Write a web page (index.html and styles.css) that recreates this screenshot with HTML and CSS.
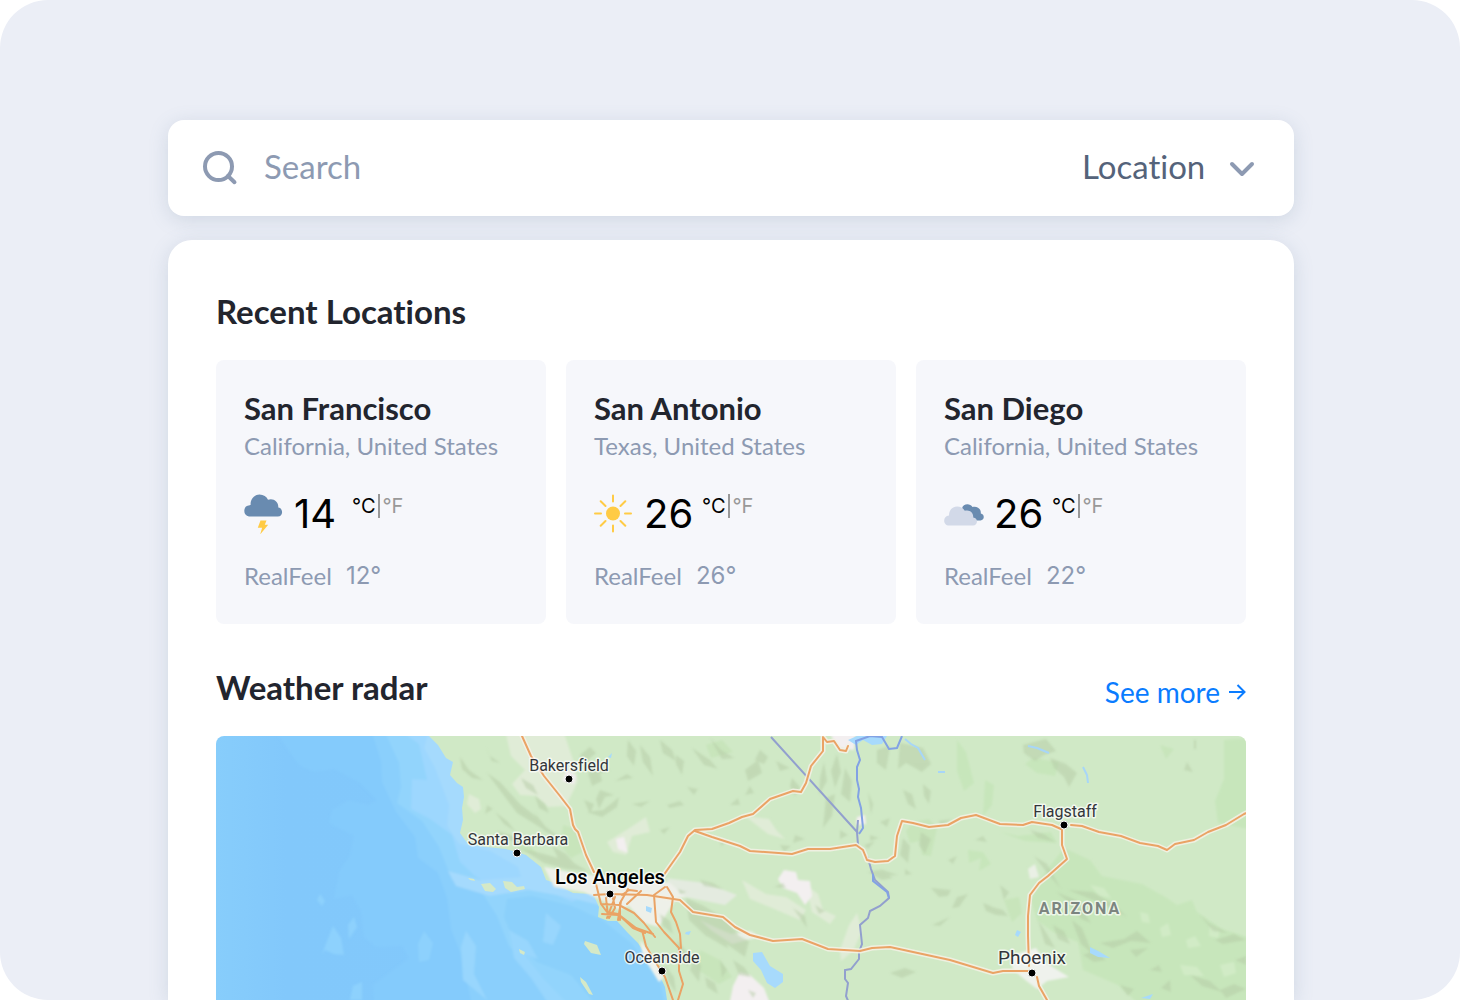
FILE: index.html
```html
<!DOCTYPE html>
<html lang="en">
<head>
  <meta charset="utf-8">
  <meta name="viewport" content="width=device-width, initial-scale=1.0">
  <title>Weather</title>
  <link rel="stylesheet" href="styles.css">
</head>
<body>
<main class="stage">
  <form class="search-bar" role="search">
    <label class="search-label" for="search" aria-label="Search">
      <svg width="40" height="40" viewBox="0 0 40 40" fill="none" stroke="#8d9ab2" stroke-width="4">
        <circle cx="18.500" cy="18.500" r="13.500"/>
        <path d="M28 28l6.500 6.200" stroke-linecap="round"/>
      </svg>
    </label>
    <input class="search-input" type="search" id="search" placeholder="Search">
    <div class="location">
      <select class="location-select" id="location" aria-label="Location">
        <option>Location</option>
      </select>
      <svg class="location-arrow" width="28" height="28" viewBox="0 0 28 28" fill="none" stroke="#8d9ab2" stroke-width="4" stroke-linecap="round" stroke-linejoin="round">
        <path d="M4 10l10 10 10-10"/>
      </svg>
    </div>
  </form>

  <section class="panel">
    <h2 class="title">Recent Locations</h2>
    <div class="cards">
      <article class="card">
        <h3 class="city">San Francisco</h3>
        <p class="region">California, United States</p>
        <div class="weather">
          <svg class="weather-icon" viewBox="0 0 40 40">
            <path fill="#698bb0" d="M5 22.500a5.700 5.700 0 0 1 .7-11.300c.3-.1.600-.1.900-.1C6.300 5 10.500.600 15.500.600c4.100 0 7 2.100 8.500 5.200 5.400-2 10.700 2 10.300 7.700 5 .7 5.300 9-.6 9z"/>
            <path fill="#ffcb45" d="M16.500 26.500h6l-1.700 4.300h3.400l-8 9.600 1.900-6.600h-4.300z"/>
          </svg>
          <span class="temp">14</span>
          <div class="units"><button class="unit active" type="button">°C</button><button class="unit" type="button">°F</button></div>
        </div>
        <p class="feel">RealFeel <span>12°</span></p>
      </article>
      <article class="card">
        <h3 class="city">San Antonio</h3>
        <p class="region">Texas, United States</p>
        <div class="weather">
          <svg class="weather-icon" viewBox="0 0 40 40">
            <circle cx="19" cy="19.500" r="7" fill="#ffcb45"/>
            <path d="M19 1.500v6M19 31.500v6M1 19.500h6M31 19.500h6M6.700 7.200l4.800 4.800M26.500 27l4.800 4.800M31.300 7.200L26.500 12M11.500 27l-4.800 4.800" stroke="#ffcb45" stroke-width="2" stroke-linecap="round"/>
          </svg>
          <span class="temp">26</span>
          <div class="units"><button class="unit active" type="button">°C</button><button class="unit" type="button">°F</button></div>
        </div>
        <p class="feel">RealFeel <span>26°</span></p>
      </article>
      <article class="card">
        <h3 class="city">San Diego</h3>
        <p class="region">California, United States</p>
        <div class="weather">
          <svg class="weather-icon" viewBox="0 0 40 40">
            <path fill="#698bb0" d="M18 14.500c1-5 8-5.500 10.500-1.500 5-1.200 8.800 2 8.300 6.500 4 .500 4 7-.3 7H30z"/>
            <path fill="#d2d9e8" d="M5.200 31.500C-1.500 31.500-1.400 22 5 21.500 5 16 8.500 12.500 13.200 12.500c3.600 0 6 1.700 7.500 4.300 5-1.700 9 2 8.500 6.700 5.300.4 4.800 8-.3 8z"/>
          </svg>
          <span class="temp">26</span>
          <div class="units"><button class="unit active" type="button">°C</button><button class="unit" type="button">°F</button></div>
        </div>
        <p class="feel">RealFeel <span>22°</span></p>
      </article>
    </div>

    <div class="radar-head">
      <h2 class="title">Weather radar</h2>
      <a class="more" href="#radar">See more
        <svg width="18" height="18" viewBox="0 0 18 18" fill="none" stroke="#0a7cff" stroke-width="2"><path d="M1 9h15M9.500 2l7 7-7 7"/></svg>
      </a>
    </div>

    <svg class="map" id="radar" viewBox="216 736 1030 264" role="img" aria-label="Weather radar map">
      <defs>
        <linearGradient id="sea" x1="0" x2="1" y1="0" y2="0">
          <stop offset="0" stop-color="#87cdfb"/>
          <stop offset=".14" stop-color="#82c8fb"/>
          <stop offset="1" stop-color="#82c9fc"/>
        </linearGradient>
        <filter id="soft"><feGaussianBlur stdDeviation="1"/></filter>
      </defs>
      <!-- sea floor -->
      <path fill="url(#sea)" d="M216 736h500v264H216z"/>
      <g filter="url(#soft)">
        <path fill="#84cbfc" d="M275 730l14 21 10 14 15 7 20-3 26 14 17 17-9 5-19-5-17 10-3 13 25 13-4 19-11 17-5 27 18-4 9 16 3 26 12 10 26-1 7 12-20 15-16 12 3 35 H560V730z"/>
        <path fill="#8acffc" d="M371 730l10 31 1 21 14 30 19 25 3 21 20 15 9 25 4 31 9 23 5 20 7 34h240V730z"/>
        <path fill="#92d4fc" d="M384 730l15 33 2 24-4 16 25 18 17 26 13 33 29 11 16 25 12 30 31 35 9 25h130V730z"/>
        <path fill="#9dd7fe" d="M399 730l20 14 8 36-15-1-1 30 19 10 22 16 8 27 15 14 23 15 27-8 20 7 27 12 28-13V730z"/>
        <path fill="#a5dafd" d="M429 730l-5 18 11 20 14 37-2 21 12 18 31 7 28 16 3 10-41 3-32-9 8 15 34 10 38-6 34 6 50 12 80 92h40V730z"/>
        <path fill="#8bd0fb" d="M507 899l25-3 40 10 30 14 30 24 28 38 5 24h-68l-26-31-34-13-23-22-10-23z"/>
        <path fill="#98d6fd" d="M509 930l19 11 10 18-13-4 18 23 27 28h-20l-19-28-17-20zM546 913l15 13-8 19-10-3zM466 931l10 15-2 28 13 26-24-20-2-33z"/>
        <path fill="#8dd1fd" d="M424 931l9 12-4 17-10 2-1-18zM333 926l8 12 3 17-10-1-9-4-3 4zM354 917l3 10-8 12-1-14zM320 894l5 7-3 5-5-6zM350 1000l3-14 9-4v18z"/>
      </g>
      <path fill="#d5e9c7" d="M481 884l9-1 6 6-3 3-8-1zM503 881l9 1 5 5 7-1 1 3-14 3-6-4zM468 878l6 1 1 2-5-1zM519 949l6 3-1 3-4-2zM585 941l12 4 4 10-10-2-7-9zM580 977l6 5 7 13-4-1-8-12z"/>
      <!-- land -->
      <path fill="#d0e9c6" d="M429 736l9 9 8 13 7 4-3 13 7 8 6 4 1 10-2 11 1 12-3 13 8 11 18 3 20 2 20 6 15 12 5 13 6 2 21 11 20 1 6 13-1 10 10 4 9 0 10 11 11 11 9 14 10 13 8 17 2 13h579V736z"/>
      <g filter="url(#soft)">
        <path fill="#e0ecd7" d="M505 730h58l10 30 5 21-12 25-18 1-12-11-16-1-8-11 13-14-14-14zM469 794l10 5 2 10-6 4-8-9zM607 842l21-13 18-12 4 15-18 4-6 19-13-3zM742 880l24 14 20 3 20 13-6 10-28-12-22-9zM806 885l12 9 5 16 13 6-6 8-18-12zM745 816l24 3 8 12 8 8-17-5zM840 950l9-25 8-12 5 18-9 20-12 10z"/>
        <path fill="#eef0e9" d="M544 867l11 2 22 5 26 2 18 6 48 0 32 5 6 9-30 2-10 15-8 14-15-4-15-17-10 4-18-10-17-8-30-5z"/>
        <path fill="#e4ebe0" d="M665 878l40 5 32 12-12 10-40-8z"/>
        <path fill="#f3eff0" d="M784 870l12 2 2 8 12 1 2 15-7 9-8-12-14-5-5-9zM616 839l8-2 4 16-10-4zM740 972l10 3 14 13 7 18h-42l4-20zM567 770l9 6-2 8-12-3zM828 730l10 18 16 2 2-20zM857 817l8-2 1 9-10 1z"/>
        <path fill="#eff2ed" d="M1013 955l23-7 10 15 23 14-22 4-10 8-13-10-12-11zM640 940l14 17 10 20-5 5-16-26z"/>
        <path fill="#eaf0e5" d="M700 920l17 8 14 6 20-3 8 6-27 7-20-13zM1028 869l7-5 4 13-9 2z"/>
      </g>
      <!-- forests -->
      <g filter="url(#soft)">
        <path fill="#c7e6bb" d="M1224 740l30-2v92l-36-7-3-22 9-22zM1033 758l26 4-4 14-18-3-12-9zM1064 848l26 12 12 16 40 8 25 14 10 7 15-5 5 12 25 17 32 10v70h-110l-26-24-35-15-5-28-25-10-16-12-6-20 9-21zM1000 832l18 4 33-4 6 11-32-2zM957 740l9 12 8 31-10 8-7-20zM968 850l15 2 8 12-12 7 2-13-12 5zM985 780l9 5-2 20-9 11z"/>
        <path fill="#c8e5bb" d="M1160 745l14 4-8 10zM1004 900l15-3 3 16-10 9zM906 831l7-9 16-3 8 9-6 28-9-1-2-14-10 2zM706 745l16-5 11 12-22 6zM700 950l20 10 12 17-13 7-22-15zM563 825l16 5 8 20-16 8-10-12zM508 835l18 6 12 14-18-5z"/>
        <path fill="#d1ebc6" d="M1160 928l8-5 3 12-9 2zM1186 940l9-4 6 10-13 2zM1210 925l10 5-2 8-9-2zM1140 912l8 2 2 9-8-1zM1090 885l14 3 7 10-12-2zM1180 965l17 2 7 9-20-1zM1220 965l14-3 2 11-12 4z"/>
      </g>
      <!-- ridges -->
      <g fill="#b5cba6" opacity=".5" filter="url(#soft)">
        <path d="M460 757l9 13 14 10-11-2-10-9zM487 773l13 9 20 22 18 14 14 17-14-9-21-13-12-16zM495 812l12 9 9 11-12-8zM485 745l5 11 10 7-8-2zM534 812l11 14 16 13-17-8zM487 805l6 4-8 5zM521 778l12 7 5 10-12-7zM552 846l14 8 8 9-16-5zM497 831l13 4 14 8-20-4zM535 796l10 8 4 9-10-5zM520 848l24 6 28 8 16 9-22-2-22-6z"/>
        <path d="M580 755l10-8 6 6-12 10zM588 773l12-7 10 5-10 2 2 8-10 5zM600 790l14 5-9 2-6 12-3-10zM612 803l7-6-2 10-15 10-15-5 16-2zM628 740l8 11-2 15-7-10zM640 745l10 12 3 19-10-14zM660 740l12 10 4 11-13-8zM676 755l8 6-2 14-6-11zM692 748l18 12 8 9-14-4zM710 738l11 12 13 8-12 1zM584 800l10 4-4 10zM660 830l10-3-6 7zM615 781l12-7 6 4zM632 804l18-3-9 6zM667 805l13-4 4 4-14 3zM687 787l11 2-4 6z"/>
        <path d="M745 770l13-10 4 13-14 8zM760 750l8 7-4 7-9-4zM776 761l14 7-10 3zM792 778l8 9-5 9-5-10zM824 762l3 19-8 14 1-17zM837 754l4 18-6 16-4-17zM845 768l7 13-2 21-9-8zM826 798l9-4-3 22-9 12zM868 792l5 12-2 11zM877 750l13-4-4 24-9-7zM900 743l23 5 8 16-9 8-16-9-8 6zM903 790l9 4 4 15-8-5zM923 784l8 7-2 13-5-8zM880 822l10-4-3 9zM903 838l7 8-2 17-8-8zM921 832l10 7-6 15-6-9zM864 845l11-4-7 8zM745 795l5-9 4 7zM730 805l8-7 2 7z"/>
        <path d="M868 872l11-2 14 8-11 2zM880 869l18 6-15 1zM931 888l20 2-3 6-9 1zM957 897l11-3-9 13-7 1zM985 905l18 5 5 6-12-1zM932 925l18-8-10 9zM948 860l9-4-4 8zM975 840l8-4 4 6zM938 821l14-2-10 6zM905 968l11 4-14 6-12-5zM905 869l7 5-7 1zM870 835l9 3-9 3zM795 835l10 4-12 4zM780 845l11 1-7 6zM840 830l8 5-8 4zM720 840l8 1-7 5zM815 905l10 6-6 3zM793 908l12 8 2 12-7-10zM774 887l9-4 3 5z"/>
        <path d="M686 898l18 8 24 15 11 15 10 5-4 16-17-12-22-9-17-16zM733 960l11 7 7 10-12-2zM700 880l13 3 10 6-19-3zM678 889l9 3-7 2zM702 925l18 9 9 15-19-11zM748 990l8 3-3 5zM660 914l10 7 3 13-10-8zM677 940l12 15-1 12-9-13zM693 960l8 5-2 17-9-12zM705 977l10 6 3 11-11-7zM665 965l9 12 2 16-8-12zM720 960l7 10-5 8z"/>
        <path d="M1023 745l23-6 10 12-12 4-9 6-11-8zM1050 758l16 6 11 9-8 14-5-10-10-9zM1034 856l13 8 14 25-17-20zM1056 892l20 8 15 23-10-4-16-20zM1068 890l25 2 22 13 12 12-24-13zM1072 920l10 8 9 22 5 7-15-13-6-15zM1038 920l9 14 8 14-10-4zM1053 925l11 6 6 13-12-5zM1100 943l24-4 13-8 14 12-20-2-18 7zM1083 955l12-5 11 10-12 2zM1130 950l18-2-12 9zM1200 915l9 8 19 10-15-2zM1215 940l19-6 12 6-23 4zM1235 960l11-4v9zM1190 975l20 6 12 11-20-6zM1220 990l14-6 12 5-20 9zM1170 980l-9 8 10 4zM1150 970l9-5 3 7zM1120 985l14 4-6 7zM1030 830l14 4 11 8-17-4zM1000 885l9 7-5 8zM983 903l8 3 5 9-10-4zM1010 950l8 4-9 2zM1194 740h2v9h-2zM1187 762l6 10-9-2z"/>
      </g>
      <!-- lakes -->
      <path fill="#a7dafc" d="M753 953l9-1 8 14 13 8 0 8-8 6-8-5-6-13-8-9zM1090 947l10 5 10 6-12-1-8-4zM608 757l4-4-1 5zM646 906l6 2-1 5-5-2zM686 932l5-1-2 4-4-1zM1017 930l4 2-3 5-3-2zM1141 998l12-4-3 5zM848 740l9-4 30 0-5 8-10 1-9-5-7 5z"/>
      <path d="M905 739l6 5 7 4 7 12M1028 746l9 2 12 5M1083 767l4 8 1 8M938 772h7" fill="none" stroke="#a7d6f8" stroke-width="2"/>
      <!-- borders -->
      <path d="M771 737l87 96M858 820l-1 12 1 13 10 13 3 11 4 11 13 12 1 6-9 8-10 5-2 7-8 7 2 19-3 8v7l-8 10-6 1v9l3 4-2 13 3 7" fill="none" stroke="#92a0ce" stroke-width="2"/>
      <path d="M902 736l-5 12-8 1-7-12-12-1-14 5 1 9 3 10-3 7v13l2 9-1 8 3 11 2 20-4 6M873 874l0 7 14 11 2 6" fill="none" stroke="#82a2e4" stroke-width="2"/>
      <!-- highways -->
      <g fill="none" stroke-linejoin="round" stroke-linecap="round">
        <g stroke="#f3f1e5" stroke-width="5" opacity=".9">
          <path d="M522 736l9 20 13 20 16 20 10 13 3 16 2 4 3 3 8 23 8 17M663 876l17-24 8-16 7-6 17-1 17-6 13-6 11-3 17-15 23-8 8 1 5-9 5-17 12-15v-14l4 5 7-1 6 9 6 1 2-5M695 831l17 6 28 9 10 5 15 1 27 2 16-5 22 0 26-4 7 5 4 10 8 2 13-1 7-5 2-20 5-15 11 2 16 4 19-2 13-7 15-3 24 9 23 1 9-3 20 3 9 4M1071 825l11 1 17 6 22 4 19 7 18 3 9 4 8-6 19-4 14-8 18-7 18-11 20-9"/>
          <path d="M610 894L647 895 680 900 693 912 723 917 735 927 750 935 773 941 802 939 828 949 860 951 872 948 890 947 950 960 993 973 1003 971 1028 971M1062 830v15l5 14-19 17-9 7-9 12-2 21 0 20 1 30M1037 977l2 9 8 14"/>
        </g>
        <g stroke="#eaa365" stroke-width="2">
          <path d="M522 736l9 20 13 20 16 20 10 13 3 16 2 4 3 3 8 23 8 17M663 876l17-24 8-16 7-6 17-1 17-6 13-6 11-3 17-15 23-8 8 1 5-9 5-17 12-15v-14l4 5 7-1 6 9 6 1 2-5M695 831l17 6 28 9 10 5 15 1 27 2 16-5 22 0 26-4 7 5 4 10 8 2 13-1 7-5 2-20 5-15 11 2 16 4 19-2 13-7 15-3 24 9 23 1 9-3 20 3 9 4M1071 825l11 1 17 6 22 4 19 7 18 3 9 4 8-6 19-4 14-8 18-7 18-11 20-9"/>
          <path d="M594 895L610 894 647 895 680 900 693 912 723 917 735 927 750 935 773 941 802 939 828 949 860 951 872 948 890 947 950 960 993 973 1003 971 1028 971M1062 830v15l5 14-19 17-9 7-9 12-2 21 0 20 1 30M1037 977l2 9 8 14"/>
          <path d="M596 884l2 8 3 12 6 8 11 2 15 14 12 5M601 904l18 1 15 8 10 10 11 14M606 898l2 18M615 897l-8 21M621 901l-3 19M613 898l2 10-6 10M622 895l7-5 8 1M628 889l-8 14 0 17M618 914l18 14 17 6M642 930l4 16 7 12 12 19 8 23M665 887l-11 8 2 27 8 10 15 16 0 23 4 13-5 16M667 887l6 10-2 15 5 10 4 12 1 14M641 891l-14 13M602 914l16 1"/>
        </g>
      </g>
      <!-- places -->
      <g class="dots">
        <circle cx="569" cy="779" r="4"/><circle cx="517" cy="853" r="4"/><circle cx="610" cy="894" r="4"/><circle cx="662" cy="971" r="4"/><circle cx="1064" cy="825" r="4"/><circle cx="1032" cy="973" r="4"/>
      </g>
      <g class="places">
        <text x="569" y="771">Bakersfield</text>
        <text x="518" y="845">Santa Barbara</text>
        <text x="662" y="963">Oceanside</text>
        <text x="1065" y="817">Flagstaff</text>
        <text class="big" x="1032" y="964">Phoenix</text>
        <text class="capital" x="610" y="884">Los Angeles</text>
        <text class="state" x="1080" y="914">ARIZONA</text>
      </g>
    </svg>
  </section>
</main>
</body>
</html>
```
FILE: styles.css
```css
* {
  box-sizing: border-box;
}
body {
  margin: 0;
  background-color: #fff;
  font-family: Lato, "Liberation Sans", sans-serif;
  font-variant-ligatures: none;
  color: #22252e;
}
h2, h3, p {
  margin: 0;
}
.stage {
  min-height: 100vh;
  padding: 120px 166px 0 168px;
  display: flex;
  flex-direction: column;
  gap: 24px;
  background-color: #ebeef6;
  border-radius: 48px;
  overflow: hidden;
}
.search-bar, .panel {
  background-color: #fff;
  box-shadow: 0 4px 20px rgba(100, 125, 155, .2);
}
.search-bar {
  height: 96px;
  padding: 0 38px 0 32px;
  display: flex;
  align-items: center;
  gap: 24px;
  border-radius: 16px;
}
.search-label {
  display: flex;
}
.search-input,
.location-select {
  padding: 0 0 4px;
  border: 0;
  outline: none;
  background: none;
  font-family: Lato, sans-serif;
  font-size: 33px;
  font-variant-ligatures: none;
  color: #55637a;
}
.search-input {
  flex: 1;
  min-width: 0;
}
.search-input::placeholder {
  color: #8d9ab2;
}
.location {
  position: relative;
}
.location-select {
  appearance: none;
  padding-right: 50px;
}
.location-arrow {
  position: absolute;
  right: 0;
  top: 8px;
  pointer-events: none;
}
.panel {
  flex: 1;
  padding: 48px 48px 0;
  border-radius: 24px 24px 0 0;
}
.title {
  font-size: 33px;
  line-height: 46px;
  padding-bottom: 2px;
  font-weight: 700;
}
.cards {
  margin: 24px 0 40px;
  display: grid;
  grid-template-columns: repeat(3, 1fr);
  gap: 20px;
}
.card {
  padding: 28px 28px 32px;
  background-color: #f6f7fb;
  border-radius: 8px;
}
.city {
  font-size: 31px;
  line-height: 40px;
  font-weight: 700;
}
.region {
  font-size: 24px;
  line-height: 36px;
  color: #8d9ab2;
}
.weather {
  height: 48px;
  margin: 26px 0 22px;
  display: grid;
  grid-template-columns: 40px 48px auto;
  justify-content: start;
  align-items: center;
  gap: 10px;
}
.weather-icon {
  width: 40px;
  height: 40px;
}
.temp {
  font: 40px/48px Inter, sans-serif;
  color: #000;
}
.units {
  align-self: start;
  margin-top: 4px;
  display: flex;
}
.unit {
  padding: 0 2px 0 0;
  border: 0;
  background: none;
  font: 20px/24px Inter, sans-serif;
  color: #999;
}
.unit + .unit {
  padding: 0 0 0 3px;
  border-left: 2px solid #999;
}
.unit.active {
  color: #000;
}
.feel {
  display: flex;
  align-items: center;
  gap: 14px;
  font-size: 24px;
  line-height: 32px;
  color: #8d9ab2;
}
.feel span {
  font-family: Inter, sans-serif;
}
.radar-head {
  margin-bottom: 24px;
  display: flex;
  justify-content: space-between;
  align-items: flex-end;
}
.more {
  display: flex;
  align-items: center;
  gap: 8px;
  font-size: 28px;
  line-height: 40px;
  color: #0a7cff;
  text-decoration: none;
}
.map {
  display: block;
  width: 100%;
  height: auto;
  border-radius: 8px 8px 0 0;
}
.dots {
  fill: #000;
  stroke: #fff;
  stroke-width: 1px;
}
.places {
  font-family: Roboto, sans-serif;
  font-size: 16px;
  text-anchor: middle;
  fill: #33353a;
  stroke: rgba(255, 255, 255, .7);
  stroke-width: 3px;
  stroke-linejoin: round;
  paint-order: stroke;
}
.places .big {
  font-size: 19px;
}
.places .capital {
  font-size: 20px;
  font-weight: 500;
  fill: #000;
}
.places .state {
  font-weight: 700;
  letter-spacing: 2px;
  fill: #7c8580;
}
```
